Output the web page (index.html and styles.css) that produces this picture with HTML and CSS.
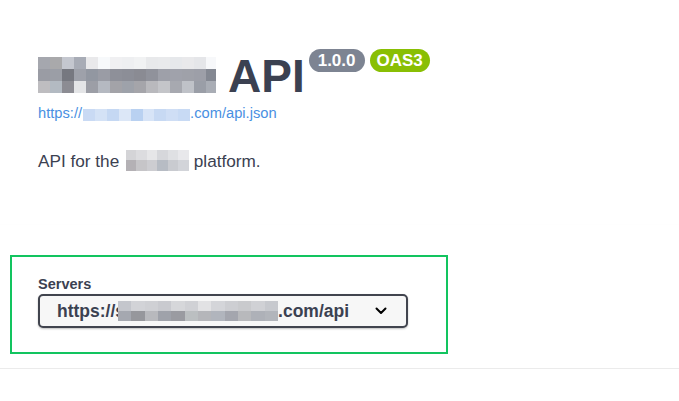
FILE: index.html
```html
<!DOCTYPE html>
<html lang="en">
<head>
    <meta charset="UTF-8">
    <meta name="viewport" content="width=device-width, initial-scale=1.0">
    <title>API Docs</title>
    <link rel="stylesheet" href="styles.css">
</head>
<body>
    <div class="info">
        <div class="title">
            <span class="blur title-blur"></span>
            <h2>API</h2>
            <span class="badge version">1.0.0</span>
            <span class="badge oas">OAS3</span>
        </div>
        <a class="url" href="#">https://<span class="blur url-blur"></span>.com/api.json</a>
        <p class="desc">API for the <span class="blur desc-blur"></span> platform.</p>
    </div>

    <div class="scheme">
        <div class="servers">
            <label for="servers">Servers</label>
            <div class="select" id="servers">
                <span>https://s</span>
                <span class="blur server-blur"></span>
                <span>.com/api</span>
                <svg class="chevron" width="12" height="8" viewBox="0 0 12 8">
                    <path d="M1.5 1.5 L6 6 L10.5 1.5" fill="none" stroke="#000" stroke-width="2" stroke-linecap="round" stroke-linejoin="round"/>
                </svg>
            </div>
        </div>
    </div>
</body>
</html>
```

FILE: styles.css
```css
body {
    font-family: "Liberation Sans", Arial, sans-serif;
    margin: 0;
    padding: 0;
    background-color: #fff;
    color: #3b4151;
}
.info {
    padding: 53px 0 0 38px;
}
.title {
    display: flex;
    align-items: flex-start;
}
.title h2 {
    margin: 0 0 0 12px;
    font-size: 46px;
    line-height: 46px;
    font-weight: bold;
    color: #3b4151;
}
.badge {
    margin-top: -4px;
    height: 23px;
    line-height: 23px;
    padding: 0 9px;
    border-radius: 12px;
    font-size: 17px;
    font-weight: bold;
    color: #fff;
}
.version {
    margin-left: 4px;
    background-color: #7d8492;
}
.oas {
    margin-left: 5px;
    padding: 0 7px;
    background-color: #89bf04;
}
.url {
    display: block;
    margin-top: 6px;
    font-size: 14.7px;
    line-height: 17px;
    color: #4990e2;
    text-decoration: none;
}
.desc {
    margin: 28px 0 0;
    font-size: 17.2px;
    line-height: 20px;
}
.blur {
    display: inline-block;
}
.title-blur {
    width: 178px;
    height: 36px;
    margin-top: 4px;
    background:
        linear-gradient(to right, #a5a7ae 0 12px, #a9a9ab 12px 24px, #c4c7cf 24px 36px, #a8acb6 36px 48px, #e9e9eb 48px 60px, #f7f9fb 60px 72px, #f0f0f2 72px 84px, #eeeff1 84px 96px, #f1f2f3 96px 108px, #e8e9eb 108px 120px, #e9eaec 120px 132px, #e6e8eb 132px 144px, #e9e9eb 144px 156px, #e5e6e9 156px 168px, #f7f8fa 168px) 0 0 / 100% 12px no-repeat,
        linear-gradient(to right, #9a9ca4 0 12px, #9b9ea6 12px 24px, #767880 24px 36px, #9ea1aa 36px 48px, #9297a1 48px 60px, #9a9ca5 60px 72px, #8e9099 72px 84px, #8c8e97 84px 96px, #8a8b93 96px 108px, #90929b 108px 120px, #9ea0a9 120px 132px, #a0a2ab 132px 144px, #9fa1a9 144px 156px, #9d9fa8 156px 168px, #848892 168px) 0 12px / 100% 12px no-repeat,
        linear-gradient(to right, #bebdc0 0 12px, #b3bac2 12px 24px, #8c8c93 24px 36px, #e4e5e7 36px 48px, #9c9ea6 48px 60px, #b5b9c1 60px 72px, #a3a3a8 72px 84px, #9ea2aa 84px 96px, #a5a5aa 96px 108px, #b9b9bd 108px 120px, #c4c5c9 120px 132px, #a7a9b0 132px 144px, #bfc2c8 144px 156px, #9a9ea7 156px 168px, #a9adb5 168px) 0 24px / 100% 12px no-repeat;
}
.url-blur {
    width: 107px;
    height: 12px;
    margin-left: 1px;
    vertical-align: -3px;
    background: linear-gradient(to right, #c9daf4 0 12px, #d4e2f6 12px 24px, #c5d8f3 24px 36px, #dce7f7 36px 48px, #b9d1f1 48px 60px, #d7e4f7 60px 71px, #c7d9f3 71px 83px, #cfdef5 83px 95px, #c8daf4 95px);
}
.desc-blur {
    width: 63px;
    height: 21px;
    margin-left: 2px;
    vertical-align: -4px;
    background:
        linear-gradient(to right, #d4d4d7 0 10px, #dcdcdf 10px 21px, #e6e6e8 21px 31px, #d6d7db 31px 42px, #dfe0e3 42px 52px, #e8e8eb 52px) 0 0 / 100% 10px no-repeat,
        linear-gradient(to right, #b4b1b5 0 10px, #c6c5c8 10px 21px, #cdcdd1 21px 31px, #b7bcc4 31px 42px, #c9cbd0 42px 52px, #d2d4d9 52px) 0 10px / 100% 11px no-repeat;
}
.scheme {
    margin-top: 54px;
    padding: 30px 0 14px 10px;
    background-color: #fff;
    border-bottom: 1px solid #ebebeb;
    box-shadow: 0 1px 2px 0 rgba(0, 0, 0, 0.08);
}
.servers {
    width: 438px;
    box-sizing: border-box;
    border: 2px solid #12c45f;
    padding: 19px 0 24px 26px;
}
.servers label {
    display: block;
    font-size: 14.5px;
    line-height: 17px;
    font-weight: bold;
    color: #3b4151;
}
.select {
    display: flex;
    align-items: center;
    width: 370px;
    height: 34px;
    margin-top: 1px;
    box-sizing: border-box;
    padding-left: 17px;
    border: 2px solid #41444e;
    border-radius: 5px;
    background-color: #f7f7f7;
    box-shadow: 0 1px 2px 0 rgba(0, 0, 0, 0.25);
    font-size: 17.5px;
    line-height: 30px;
    font-weight: bold;
    color: #3b4151;
}
.server-blur {
    width: 160px;
    height: 20px;
    margin-left: -7px;
    background:
        linear-gradient(to right, #c4c6cc 0 13px, #d2d3d7 13px 27px, #cfd0d4 27px 40px, #c9cacf 40px 53px, #d6d7da 53px 67px, #d0d1d5 67px 80px, #e2e2e4 80px 93px, #d4d5d9 93px 107px, #cdced2 107px 120px, #c9cacd 120px 133px, #d0d1d5 133px 147px, #c7c9ce 147px) 0 0 / 100% 10px no-repeat,
        linear-gradient(to right, #a5a8b0 0 13px, #96979c 13px 27px, #b8b9bd 27px 40px, #9fa2aa 40px 53px, #9a9ba1 53px 67px, #bbbfc1 67px 80px, #b5b6ba 80px 93px, #b1b5bd 93px 107px, #a4a6ae 107px 120px, #b8b9bc 120px 133px, #aeb1b8 133px 147px, #b2b5bb 147px) 0 10px / 100% 10px no-repeat;
}
.chevron {
    margin-left: auto;
    margin-right: 19px;
}
```
